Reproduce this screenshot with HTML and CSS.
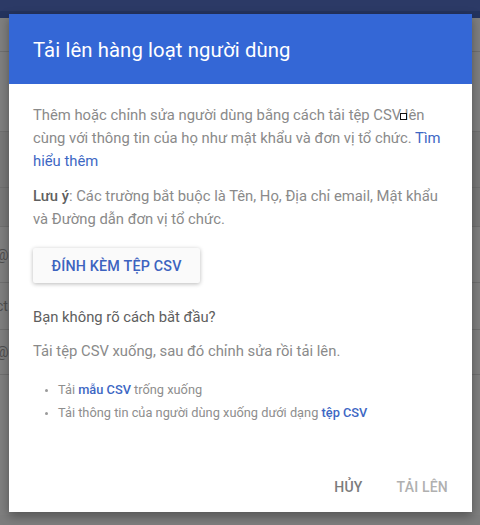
FILE: index.html
```html
<!DOCTYPE html>
<html lang="vi">
<head>
<meta charset="utf-8">
<link rel="stylesheet" href="styles.css">
</head>
<body>
<div class="page">
  <div class="topbar"></div>
  <div class="rows">
    <div class="row r1"></div>
    <div class="row r2"></div>
    <div class="row r3 dark"></div>
    <div class="row r4 dark"></div>
    <div class="row r5"><span class="cell">@</span></div>
    <div class="row r6"><span class="cell">ct</span></div>
    <div class="row r7"><span class="cell">@</span></div>
    <div class="row r8"></div>
  </div>

  <div class="dialog">
    <div class="dialog-header">
      <h1 class="dialog-title">Tải lên hàng loạt người dùng</h1>
    </div>
    <div class="dialog-body">
      <p class="para">Thêm hoặc chỉnh sửa người dùng bằng cách tải tệp CSV lên cùng với thông tin của họ như mật khẩu và đơn vị tổ chức. <a class="link">Tìm hiểu thêm</a></p>
      <p class="para note"><span class="strong">Lưu ý</span>: Các trường bắt buộc là Tên, Họ, Địa chỉ email, Mật khẩu và Đường dẫn đơn vị tổ chức.</p>
      <button class="attach">ĐÍNH KÈM TỆP CSV</button>
      <h2 class="subhead">Bạn không rõ cách bắt đầu?</h2>
      <p class="para">Tải tệp CSV xuống, sau đó chỉnh sửa rồi tải lên.</p>
      <ul class="steps">
        <li>Tải <a class="link strong-link">mẫu CSV</a> trống xuống</li>
        <li>Tải thông tin của người dùng xuống dưới dạng <a class="link strong-link">tệp CSV</a></li>
      </ul>
    </div>
    <div class="dialog-footer">
      <button class="action cancel">HỦY</button>
      <button class="action upload">TẢI LÊN</button>
    </div>
    <span class="cursor"></span>
  </div>
</div>
</body>
</html>
```
FILE: styles.css
```css
* { box-sizing: border-box; }
html, body { margin: 0; padding: 0; }
body {
  width: 480px;
  height: 525px;
  overflow: hidden;
  font-family: Roboto, "Noto Sans", "Liberation Sans", sans-serif;
  background: #7d7d7d;
}
.page {
  position: relative;
  width: 480px;
  height: 525px;
  overflow: hidden;
}
.topbar {
  height: 18px;
  background: linear-gradient(#2c3a66 0, #2c3a66 11px, #24335e 11px, #24335e 18px);
}
.rows { display: flex; flex-direction: column; }
.row {
  border-bottom: 1px solid #6f6f6f;
  background: #7f7f7f;
  display: flex;
  align-items: center;
}
.row.dark { background: #787878; }
.r1 { height: 34px; }
.r2 { height: 80px; }
.r3 { height: 56px; }
.r4 { height: 39px; }
.r5 { height: 56px; }
.r6 { height: 47px; }
.r7 { height: 45px; }
.r8 { height: 140px; border-bottom: 0; }
.cell {
  font-size: 14px;
  color: #4f4f4f;
  margin-left: -4px;
}

.dialog {
  position: absolute;
  left: 9px;
  top: 14px;
  width: 463px;
  height: 498px;
  background: #fff;
  box-shadow: 0 4px 10px rgba(0,0,0,0.35);
  display: flex;
  flex-direction: column;
}
.dialog-header {
  height: 70px;
  background: #3467d6;
  display: flex;
  align-items: center;
  padding-left: 24px;
  padding-top: 1px;
}
.dialog-title {
  margin: 0;
  font-size: 20.3px;
  font-weight: 400;
  color: #fff;
  letter-spacing: 0.1px;
}
.dialog-body {
  flex: 1;
  padding: 20px 30px 0 24px;
}
.para {
  margin: 0 0 12px 0;
  font-size: 14.8px;
  line-height: 23px;
  color: #8a8a8a;
}
.note { margin-bottom: 17px; }
.strong { color: #5f5f5f; font-weight: 500; }
.link { color: #3d67c4; }
.strong-link { font-weight: 500; }
.attach {
  display: block;
  height: 35px;
  width: 167px;
  padding: 0;
  border: 0;
  border-radius: 2px;
  background: #fafafa;
  box-shadow: 0 1px 4px rgba(0,0,0,0.28);
  font-family: inherit;
  font-size: 14.3px;
  font-weight: 500;
  color: #3d63bf;
  letter-spacing: 0.2px;
  margin: 0 0 23px 0;
}
.subhead {
  margin: 0 0 11px 0;
  font-size: 14.8px;
  font-weight: 400;
  line-height: 23px;
  color: #5e5e5e;
}
.steps {
  margin: 15px 0 0 0;
  padding-left: 25px;
  font-size: 12.8px;
  line-height: 23px;
  color: #8e8e8e;
}
.steps li::marker { color: #9a9a9a; font-size: 10px; }
.dialog-footer {
  height: 50px;
  display: flex;
  justify-content: flex-end;
  align-items: center;
  gap: 34px;
  padding-right: 24px;
  margin-bottom: 0;
}
.action {
  border: 0;
  background: none;
  padding: 0;
  font-family: inherit;
  font-size: 14px;
  font-weight: 500;
  letter-spacing: 0.2px;
}
.cancel { color: #7b7b7b; }
.upload { color: #b0b0b0; }
.cursor {
  position: absolute;
  left: 391px;
  top: 99px;
  width: 7px;
  height: 7px;
  border: 1.5px solid #111;
  background: #fff;
}
```
